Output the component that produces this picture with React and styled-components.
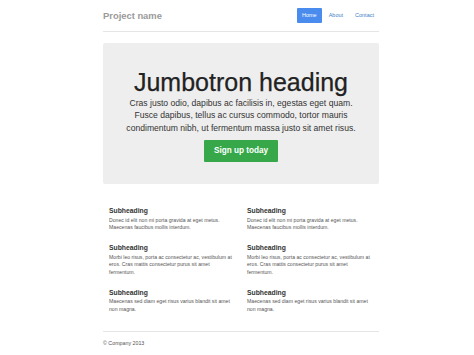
import React from 'react';
import styled, { createGlobalStyle } from 'styled-components';

const GlobalStyle = createGlobalStyle`
  html, body {
    margin: 0;
    padding: 0;
    background: #ffffff;
  }
  body {
    font-family: "Liberation Sans", Arial, Helvetica, sans-serif;
    color: #333333;
  }
`;

const Page = styled.div`
  width: 276px;
  margin-left: 103px;
`;

const Header = styled.header`
  display: flex;
  align-items: center;
  justify-content: space-between;
  padding: 8px 0;
  border-bottom: 1px solid #e5e5e5;
`;

const Brand = styled.h3`
  margin: 0;
  font-size: 9.4px;
  font-weight: 700;
  color: #9a9a9a;
  line-height: 15px;
`;

const Nav = styled.nav`
  display: flex;
  gap: 2px;
`;

const Pill = styled.a`
  display: block;
  height: 15px;
  line-height: 15px;
  padding: 0 5px;
  font-size: 5.5px;
  border-radius: 1px;
  text-decoration: none;
  background: ${p => (p.$active ? '#4a8ced' : 'transparent')};
  color: ${p => (p.$active ? '#ffffff' : '#3f7fc6')};
`;

const Jumbotron = styled.section`
  margin-top: 11px;
  padding: 25px 20px 22px;
  background: #eeeeee;
  border-radius: 2px;
  text-align: center;
`;

const Heading = styled.h1`
  margin: 0;
  font-size: 25px;
  line-height: 28px;
  font-weight: 400;
  color: #222222;
  -webkit-text-stroke: 0.25px #222222;
`;

const Lead = styled.p`
  margin: 1px 0 0;
  font-size: 8.6px;
  line-height: 12.4px;
  color: #333333;
`;

const SignUp = styled.a`
  display: inline-block;
  margin-top: 6px;
  width: 74px;
  height: 22px;
  line-height: 22px;
  background: #36a84a;
  border-radius: 1px;
  color: #ffffff;
  font-size: 8.2px;
  font-weight: 700;
  text-decoration: none;
`;

const Marketing = styled.div`
  display: grid;
  grid-template-columns: 1fr 1fr;
  margin-top: 21.5px;
`;

const Column = styled.div`
  display: flex;
  flex-direction: column;
  padding: 0 6px;
`;

const Block = styled.div`
  margin-bottom: 11.4px;

  &:last-child {
    margin-bottom: 0;
  }
`;

const Subheading = styled.h4`
  margin: 0 0 1.8px;
  font-size: 6.8px;
  line-height: 9px;
  font-weight: 700;
  color: #333333;
`;

const Body = styled.p`
  margin: 0;
  font-size: 5.15px;
  line-height: 7.5px;
  color: #555555;
`;

const Footer = styled.footer`
  margin-top: 18px;
  padding-top: 7px;
  border-top: 1px solid #e5e5e5;
  font-size: 5.3px;
  line-height: 8px;
  color: #555555;
`;

const blocks = [
  {
    title: 'Subheading',
    lines: ['Donec id elit non mi porta gravida at eget metus.', 'Maecenas faucibus mollis interdum.'],
  },
  {
    title: 'Subheading',
    lines: [
      'Morbi leo risus, porta ac consectetur ac, vestibulum at',
      'eros. Cras mattis consectetur purus sit amet',
      'fermentum.',
    ],
  },
  {
    title: 'Subheading',
    lines: ['Maecenas sed diam eget risus varius blandit sit amet', 'non magna.'],
  },
];

const Lines = ({ lines }) =>
  lines.map((line, i) => (
    <React.Fragment key={i}>
      {line}
      {i < lines.length - 1 && <br />}
    </React.Fragment>
  ));

const App = () => {
  return (
    <>
      <GlobalStyle />
      <Page>
        <Header>
          <Brand>Project name</Brand>
          <Nav>
            <Pill href="#" $active>Home</Pill>
            <Pill href="#">About</Pill>
            <Pill href="#">Contact</Pill>
          </Nav>
        </Header>

        <Jumbotron>
          <Heading>Jumbotron heading</Heading>
          <Lead>
            <Lines
              lines={[
                'Cras justo odio, dapibus ac facilisis in, egestas eget quam.',
                'Fusce dapibus, tellus ac cursus commodo, tortor mauris',
                'condimentum nibh, ut fermentum massa justo sit amet risus.',
              ]}
            />
          </Lead>
          <SignUp href="#">Sign up today</SignUp>
        </Jumbotron>

        <Marketing>
          {[0, 1].map(col => (
            <Column key={col}>
              {blocks.map((b, i) => (
                <Block key={i}>
                  <Subheading>{b.title}</Subheading>
                  <Body>
                    <Lines lines={b.lines} />
                  </Body>
                </Block>
              ))}
            </Column>
          ))}
        </Marketing>

        <Footer>© Company 2013</Footer>
      </Page>
    </>
  );
};

export default App;
